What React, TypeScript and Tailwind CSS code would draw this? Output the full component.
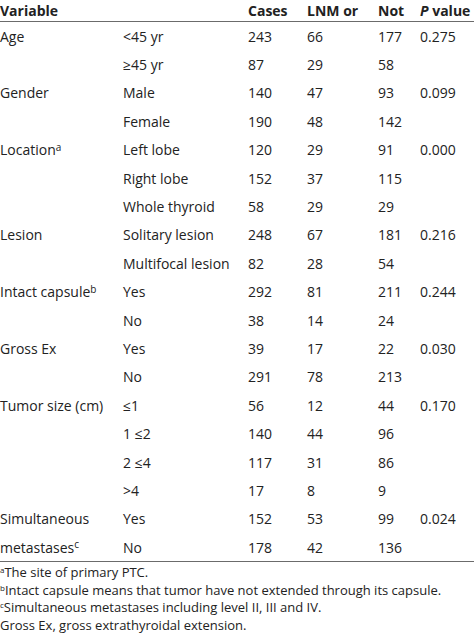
import React from "react";

type Row = {
  v?: React.ReactNode;
  sub: string;
  cases: string;
  lnm: string;
  not: string;
  p?: string;
};

const Sup = ({ c }: { c: string }) => <sup className="text-[10px] top-[-0.45em]">{c}</sup>;

const rows: Row[] = [
  { v: "Age", sub: "<45 yr", cases: "243", lnm: "66", not: "177", p: "0.275" },
  { sub: "≥45 yr", cases: "87", lnm: "29", not: "58" },
  { v: "Gender", sub: "Male", cases: "140", lnm: "47", not: "93", p: "0.099" },
  { sub: "Female", cases: "190", lnm: "48", not: "142" },
  {
    v: (
      <>
        Location<Sup c="a" />
      </>
    ),
    sub: "Left lobe",
    cases: "120",
    lnm: "29",
    not: "91",
    p: "0.000",
  },
  { sub: "Right lobe", cases: "152", lnm: "37", not: "115" },
  { sub: "Whole thyroid", cases: "58", lnm: "29", not: "29" },
  { v: "Lesion", sub: "Solitary lesion", cases: "248", lnm: "67", not: "181", p: "0.216" },
  { sub: "Multifocal lesion", cases: "82", lnm: "28", not: "54" },
  {
    v: (
      <>
        Intact capsule<Sup c="b" />
      </>
    ),
    sub: "Yes",
    cases: "292",
    lnm: "81",
    not: "211",
    p: "0.244",
  },
  { sub: "No", cases: "38", lnm: "14", not: "24" },
  { v: "Gross Ex", sub: "Yes", cases: "39", lnm: "17", not: "22", p: "0.030" },
  { sub: "No", cases: "291", lnm: "78", not: "213" },
  { v: "Tumor size (cm)", sub: "≤1", cases: "56", lnm: "12", not: "44", p: "0.170" },
  { sub: "1 ≤2", cases: "140", lnm: "44", not: "96" },
  { sub: "2 ≤4", cases: "117", lnm: "31", not: "86" },
  { sub: ">4", cases: "17", lnm: "8", not: "9" },
  { v: "Simultaneous", sub: "Yes", cases: "152", lnm: "53", not: "99", p: "0.024" },
  {
    v: (
      <>
        metastases<Sup c="c" />
      </>
    ),
    sub: "No",
    cases: "178",
    lnm: "42",
    not: "136",
  },
];

const cols = "grid grid-cols-[123px_125px_59px_71px_42px_1fr]";

export default function App() {
  return (
    <div
      className="w-[474px] h-[634px] bg-white text-[#222] overflow-hidden"
      style={{ fontFamily: '"Open Sans", "Liberation Sans", sans-serif' }}
    >
      <div className={`${cols} h-[22px] items-center border-b border-[#6b6b6b] text-[14px] font-bold`}>
        <div>Variable</div>
        <div />
        <div>Cases</div>
        <div>LNM or</div>
        <div>Not</div>
        <div className="whitespace-nowrap">
          <span className="italic">P</span> value
        </div>
      </div>
      <div className="border-b border-[#6b6b6b]">
        {rows.map((r, i) => (
          <div key={i} className={`${cols} h-[28.4px] items-center text-[14px] whitespace-nowrap`}>
            <div>{r.v}</div>
            <div>{r.sub}</div>
            <div>{r.cases}</div>
            <div>{r.lnm}</div>
            <div>{r.not}</div>
            <div>{r.p}</div>
          </div>
        ))}
      </div>
      <div className="pt-[2px] text-[13px] leading-[17.4px]">
        <p>
          <sup className="text-[8px]">a</sup>The site of primary PTC.
        </p>
        <p>
          <sup className="text-[8px]">b</sup>Intact capsule means that tumor have not extended through its capsule.
        </p>
        <p>
          <sup className="text-[8px]">c</sup>Simultaneous metastases including level II, III and IV.
        </p>
        <p>Gross Ex, gross extrathyroidal extension.</p>
      </div>
    </div>
  );
}
